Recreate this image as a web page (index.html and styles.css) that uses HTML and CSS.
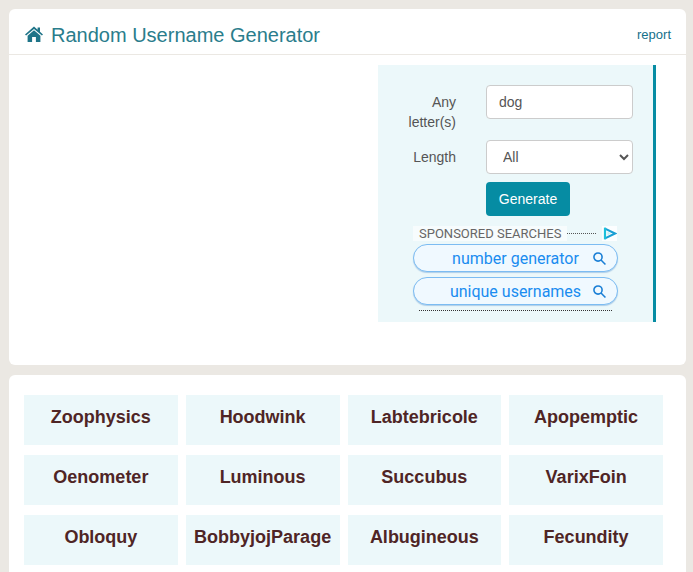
FILE: index.html
```html
<!DOCTYPE html>
<html lang="en">
<head>
  <meta charset="UTF-8">
  <meta name="viewport" content="width=device-width, initial-scale=1.0">
  <title>Random Username Generator</title>
  <link rel="stylesheet" href="styles.css">
</head>
<body>
  <section class="card main-card">
    <header class="card-head">
      <h1 class="title">
        <svg class="home-icon" viewBox="0 0 18 16" aria-hidden="true">
          <path d="M9 0.6 L12.6 3.7 V1.6 H15 V5.8 L18 8.4 L16.9 9.6 L9 2.9 L1.1 9.6 L0 8.4 Z"/>
          <path d="M9 4.3 L15.4 9.7 V16 H10.9 V11 H7.1 V16 H2.6 V9.7 Z"/>
        </svg>
        Random Username Generator
      </h1>
      <a class="report" href="#">report</a>
    </header>
    <div class="card-body">
      <div class="panel">
        <form class="gen-form">
          <label class="field-label" for="letters">Any letter(s)</label>
          <input class="field" type="text" id="letters" value="dog">
          <label class="field-label" for="length">Length</label>
          <select class="field" id="length">
            <option>All</option>
          </select>
          <button class="gen-btn" type="button">Generate</button>
        </form>
        <div class="sponsored">
          <div class="sponsored-head">
            <span class="sponsored-text">SPONSORED SEARCHES</span>
            <span class="dots"></span>
            <svg class="ad-icon" viewBox="0 0 15 15" aria-hidden="true">
              <path d="M3 2.6 L13 7.5 L3 12.4" fill="none" stroke="#1a9fd4" stroke-width="2"/>
              <path d="M3 1.6 V13.4" fill="none" stroke="#1cc0da" stroke-width="2.2"/>
              <path d="M5.4 5.6 L9 7.5 L5.4 9.4 Z" fill="#c8eff5"/>
            </svg>
          </div>
          <a class="pill" href="#">
            <span class="pill-text">number generator</span>
            <svg class="search-icon" viewBox="0 0 14 14" aria-hidden="true">
              <circle cx="5.4" cy="5.4" r="4.4"/>
              <path d="M8.6 8.6 L13.4 13.4"/>
            </svg>
          </a>
          <a class="pill" href="#">
            <span class="pill-text">unique usernames</span>
            <svg class="search-icon" viewBox="0 0 14 14" aria-hidden="true">
              <circle cx="5.4" cy="5.4" r="4.4"/>
              <path d="M8.6 8.6 L13.4 13.4"/>
            </svg>
          </a>
          <div class="sponsored-foot"></div>
        </div>
      </div>
    </div>
  </section>

  <section class="card names-card">
    <div class="names">
      <div class="name">Zoophysics</div>
      <div class="name">Hoodwink</div>
      <div class="name">Labtebricole</div>
      <div class="name">Apopemptic</div>
      <div class="name">Oenometer</div>
      <div class="name">Luminous</div>
      <div class="name">Succubus</div>
      <div class="name">VarixFoin</div>
      <div class="name">Obloquy</div>
      <div class="name">BobbyjojParage</div>
      <div class="name">Albugineous</div>
      <div class="name">Fecundity</div>
    </div>
  </section>
</body>
</html>
```

FILE: styles.css
```css
html, body {
  height: 572px;
  overflow: hidden;
}

body {
  font-family: "Liberation Sans", Arial, sans-serif;
  margin: 0;
  padding: 9px 7px 0 9px;
  background-color: #ebe8e3;
  color: #555;
}

.card {
  background-color: white;
  border-radius: 6px;
}

.main-card {
  height: 356px;
  margin-bottom: 10px;
}

.card-head {
  display: flex;
  justify-content: space-between;
  align-items: center;
  height: 46px;
  box-sizing: border-box;
  padding: 6px 15px 0 16px;
  border-bottom: 1px solid #ebe8e3;
}

.title {
  display: flex;
  align-items: center;
  gap: 8px;
  margin: 0;
  padding-top: 2px;
  font-size: 20px;
  font-weight: normal;
  color: #2a7d8c;
}

.home-icon {
  width: 18px;
  height: 16px;
  margin-top: -3px;
  fill: #1f7488;
}

.report {
  font-size: 13px;
  color: #15708a;
  text-decoration: none;
}

.card-body {
  display: flex;
  justify-content: flex-end;
  padding: 10px 30px 0 0;
}

.panel {
  width: 278px;
  height: 257px;
  box-sizing: border-box;
  background-color: #ecf8fa;
  border-right: 3px solid #068ca3;
  padding-top: 20px;
}

.gen-form {
  display: grid;
  grid-template-columns: 78px 147px;
  column-gap: 30px;
  row-gap: 8px;
  font-size: 14px;
}

.field-label {
  text-align: right;
  line-height: 20px;
  padding: 7px 0 0 20px;
  color: #555;
}

.field {
  width: 147px;
  height: 34px;
  box-sizing: border-box;
  border: 1px solid #ccc;
  border-radius: 4px;
  background-color: white;
  color: #555;
  font-family: inherit;
  font-size: 14px;
  padding: 0 12px;
}

.gen-btn {
  grid-column: 2;
  justify-self: start;
  width: 84px;
  height: 34px;
  background-color: #068ca3;
  color: white;
  border: none;
  border-radius: 4px;
  font-family: inherit;
  font-size: 14px;
  padding: 0;
  cursor: pointer;
}

.sponsored {
  width: 205px;
  margin: 9px 0 0 35px;
  font-family: Roboto, sans-serif;
}

.sponsored-head {
  display: flex;
  align-items: center;
  height: 16px;
  margin-bottom: 3px;
}

.sponsored-text {
  background-color: #f7fcfd;
  padding: 0 6px;
  font-size: 13px;
  line-height: 15px;
  color: #666;
  white-space: nowrap;
}

.dots {
  flex: 1;
  margin-right: 6px;
  border-top: 1px dotted #555;
}

.ad-icon {
  flex: none;
  width: 15px;
  height: 15px;
  background-color: #fcfeff;
  margin-right: 1px;
}

.pill {
  display: grid;
  grid-template-columns: 1fr auto 1fr;
  align-items: center;
  height: 28px;
  box-sizing: border-box;
  margin-bottom: 5px;
  padding: 0 11px;
  background-color: #f0f9ff;
  border: 1px solid #7cbcf2;
  border-radius: 14px;
  box-shadow: 0 1px 1px rgba(60, 130, 200, 0.35);
  color: #1a8cf0;
  font-size: 16px;
  text-decoration: none;
}

.pill-text {
  grid-column: 2;
  white-space: nowrap;
}

.search-icon {
  justify-self: end;
  width: 13px;
  height: 13px;
  fill: none;
  stroke: #1a7fd6;
  stroke-width: 1.7;
}

.sponsored-foot {
  width: 193px;
  margin: 0 0 0 6px;
  border-top: 1px dotted #333;
}

.names-card {
  height: 197px;
  padding: 20px 23px 0 15px;
}

.names {
  display: grid;
  grid-template-columns: repeat(4, 1fr);
  grid-auto-rows: 50px;
  gap: 10px 8px;
}

.name {
  background-color: #ecf8fa;
  color: #4f2525;
  font-size: 18px;
  font-weight: bold;
  text-align: center;
  padding-top: 12px;
  line-height: 20px;
  box-sizing: border-box;
  white-space: nowrap;
}
```
